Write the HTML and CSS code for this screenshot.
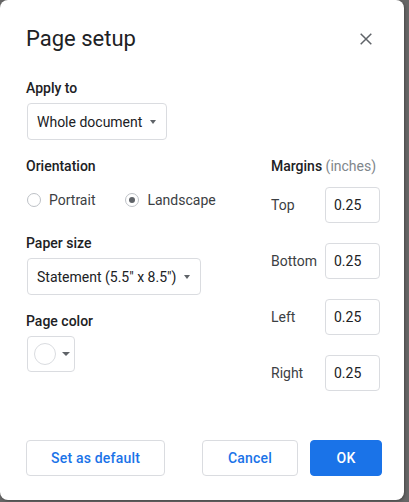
FILE: index.html
```html
<!DOCTYPE html>
<html lang="en">
<head>
<meta charset="utf-8">
<title>Page setup</title>
<link rel="stylesheet" href="styles.css">
</head>
<body>
<div class="dialog">
  <div class="header">
    <div class="title">Page setup</div>
    <button class="close" aria-label="Close">
      <svg width="12" height="12" viewBox="0 0 12 12"><path d="M0.7 0.7L11.3 11.3M11.3 0.7L0.7 11.3" stroke="#5f6368" stroke-width="1.5" fill="none"/></svg>
    </button>
  </div>
  <div class="main">
    <div class="section">
      <div class="label">Apply to</div>
      <div class="select"><span>Whole document</span><i class="arrow"></i></div>
    </div>
    <div class="columns">
      <div class="left">
        <div class="section">
          <div class="label">Orientation</div>
          <div class="radio-row">
            <label class="option"><span class="radio"></span><span>Portrait</span></label>
            <label class="option"><span class="radio checked"></span><span>Landscape</span></label>
          </div>
        </div>
        <div class="section">
          <div class="label">Paper size</div>
          <div class="select"><span>Statement (5.5" x 8.5")</span><i class="arrow"></i></div>
        </div>
        <div class="section">
          <div class="label">Page color</div>
          <div class="swatch"><span class="circle"></span><i class="arrow"></i></div>
        </div>
      </div>
      <div class="right">
        <div class="label">Margins <span class="unit">(inches)</span></div>
        <div class="margins">
          <div class="mrow"><span class="mlabel">Top</span><span class="input">0.25</span></div>
          <div class="mrow"><span class="mlabel">Bottom</span><span class="input">0.25</span></div>
          <div class="mrow"><span class="mlabel">Left</span><span class="input">0.25</span></div>
          <div class="mrow"><span class="mlabel">Right</span><span class="input">0.25</span></div>
        </div>
      </div>
    </div>
  </div>
  <div class="footer">
    <button class="btn">Set as default</button>
    <div class="actions">
      <button class="btn cancel">Cancel</button>
      <button class="btn primary">OK</button>
    </div>
  </div>
</div>
</body>
</html>
```

FILE: styles.css
```css
html, body {
  margin: 0;
  padding: 0;
}
body {
  background: #666;
  width: 409px;
  height: 502px;
  overflow: hidden;
  font-family: Roboto, "Liberation Sans", Arial, sans-serif;
  color: #202124;
}
.dialog {
  box-sizing: border-box;
  width: 404px;
  height: 500px;
  background: #fff;
  border-radius: 8px;
  box-shadow: 1px 1px 3px rgba(0,0,0,0.3);
  padding: 25px 22px 24px 26px;
  display: flex;
  flex-direction: column;
}
.header {
  display: flex;
  justify-content: space-between;
  align-items: center;
  height: 28px;
}
.title {
  font-size: 22px;
  line-height: 28px;
  color: #202124;
}
.close {
  border: 0;
  background: none;
  padding: 0;
  margin-right: 10px;
  width: 12px;
  height: 12px;
  display: flex;
}
.main {
  margin-top: 25px;
  display: flex;
  flex-direction: column;
}
.section {
  display: flex;
  flex-direction: column;
  align-items: flex-start;
}
.label {
  font-size: 14px;
  line-height: 20px;
  font-weight: 500;
  color: #202124;
  margin-bottom: 5px;
}
.unit {
  font-weight: 400;
  color: #80868b;
}
.select {
  box-sizing: border-box;
  height: 37px;
  margin-left: 1px;
  border: 1px solid #dadce0;
  border-radius: 4px;
  display: flex;
  align-items: center;
  padding: 0 10px 0 9px;
  font-size: 14px;
  color: #202124;
}
.arrow {
  display: block;
  width: 0;
  height: 0;
  border-left: 3.5px solid transparent;
  border-right: 3.5px solid transparent;
  border-top: 4px solid #5f6368;
  margin-left: 8px;
}
.columns {
  display: flex;
  margin-top: 16px;
}
.left {
  width: 245px;
  display: flex;
  flex-direction: column;
  gap: 16px;
}
.radio-row {
  display: flex;
  align-items: center;
  gap: 30px;
  height: 35px;
  margin-top: 1px;
  margin-left: 1px;
  font-size: 14px;
  color: #3c4043;
}
.option {
  display: flex;
  align-items: center;
  gap: 8px;
}
.radio {
  box-sizing: border-box;
  width: 14px;
  height: 14px;
  border: 1px solid #bdc1c6;
  border-radius: 50%;
  display: flex;
  align-items: center;
  justify-content: center;
}
.radio.checked::after {
  content: "";
  width: 6px;
  height: 6px;
  border-radius: 50%;
  background: #5f6368;
}
.swatch {
  box-sizing: border-box;
  height: 36px;
  margin-left: 1px;
  border: 1px solid #dadce0;
  border-radius: 4px;
  display: flex;
  align-items: center;
  padding: 0 4px 0 6px;
}
.circle {
  box-sizing: border-box;
  width: 22px;
  height: 22px;
  border: 1px solid #dadce0;
  border-radius: 50%;
}
.swatch .arrow {
  margin-left: 6px;
  border-left-width: 4px;
  border-right-width: 4px;
}
.right {
  flex: 1;
  display: flex;
  flex-direction: column;
}
.margins {
  margin-top: 6px;
  display: flex;
  flex-direction: column;
  gap: 20px;
}
.mrow {
  display: flex;
  align-items: center;
  height: 36px;
}
.mlabel {
  width: 54px;
  font-size: 14px;
  color: #3c4043;
}
.input {
  box-sizing: border-box;
  width: 55px;
  height: 36px;
  border: 1px solid #dadce0;
  border-radius: 4px;
  padding-left: 8px;
  display: flex;
  align-items: center;
  font-size: 14px;
  color: #202124;
}
.footer {
  margin-top: auto;
  display: flex;
  justify-content: space-between;
  align-items: center;
}
.actions {
  display: flex;
  gap: 12px;
}
.btn {
  box-sizing: border-box;
  height: 36px;
  padding: 0 24px;
  min-width: 72px;
  border: 1px solid #dadce0;
  border-radius: 4px;
  background: #fff;
  color: #1a73e8;
  font-family: Roboto, "Liberation Sans", Arial, sans-serif;
  font-size: 14px;
  font-weight: 500;
  letter-spacing: 0.2px;
}
.btn.cancel {
  min-width: 96px;
}
.btn.primary {
  background: #1a73e8;
  border-color: #1a73e8;
  color: #fff;
}
```
